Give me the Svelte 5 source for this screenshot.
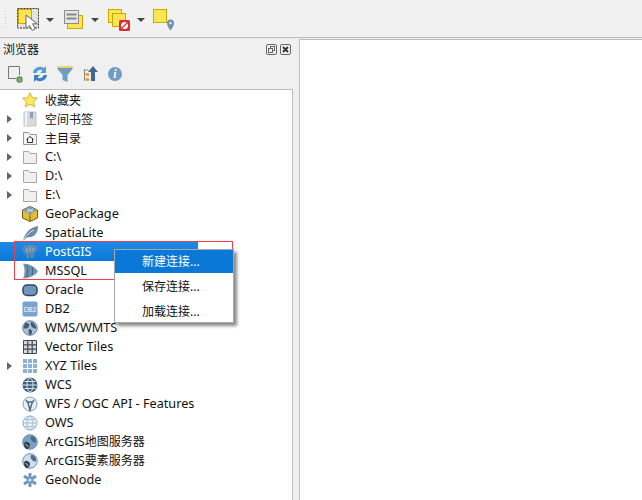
<script>
  const rows = [
    { k: 'star', c: '收藏夹' },
    { k: 'book', c: '空间书签', a: 1 },
    { k: 'home', c: '主目录', a: 1 },
    { k: 'folder', t: 'C:\\', a: 1 },
    { k: 'folder', t: 'D:\\', a: 1 },
    { k: 'folder', t: 'E:\\', a: 1 },
    { k: 'gpkg', t: 'GeoPackage' },
    { k: 'feather', t: 'SpatiaLite' },
    { k: 'pg', t: 'PostGIS', sel: 1 },
    { k: 'ms', t: 'MSSQL' },
    { k: 'oracle', t: 'Oracle' },
    { k: 'db2', t: 'DB2' },
    { k: 'globe', t: 'WMS/WMTS' },
    { k: 'grid', t: 'Vector Tiles' },
    { k: 'xyz', t: 'XYZ Tiles', a: 1 },
    { k: 'wcs', t: 'WCS' },
    { k: 'wfs', t: 'WFS / OGC API - Features' },
    { k: 'ows', t: 'OWS' },
    { k: 'arc', t: 'ArcGIS', c: '地图服务器' },
    { k: 'arc2', t: 'ArcGIS', c: '要素服务器' },
    { k: 'geonode', t: 'GeoNode' }
  ];
</script>

<div class="app">
  <header class="toolbar">
    <div class="grip"></div>
    <svg class="tool t1" width="26" height="37" viewBox="15 0 26 37">
      <rect x="17.500" y="8.500" width="21" height="19.500" fill="#e2e2e2" stroke="#333" stroke-dasharray="2 1" />
      <rect x="18.500" y="9.500" width="13" height="14" fill="#ffe552" stroke="#c9a800" />
      <path d="M26 15v13.500l3.500-3 2.800 5 3-1.700-2.800-5h4.800z" fill="#fff" stroke="#666" />
    </svg>
    <i class="drop d1"></i>
    <svg class="tool t2" width="23" height="37" viewBox="62 0 23 37">
      <rect x="67.500" y="15.500" width="15" height="13" fill="#ffe552" stroke="#c9a800" />
      <rect x="64.500" y="10.500" width="14" height="13" fill="#e6e6e6" stroke="#8c8c8c" />
      <path d="M66.500 14.500h10M66.500 18.500h10" stroke="#888" stroke-width="2" />
    </svg>
    <i class="drop d2"></i>
    <svg class="tool t3" width="24" height="37" viewBox="107 0 24 37">
      <rect x="108.500" y="9.500" width="13" height="13" fill="#ffe552" stroke="#c9a800" />
      <rect x="112.500" y="13.500" width="13" height="13" fill="#ffe552" stroke="#c9a800" />
      <rect x="119" y="20" width="11" height="11" rx="1.500" fill="#dd2a36" />
      <circle cx="124.500" cy="25.500" r="3.500" fill="#fff" />
      <path d="M122 28l5-5" stroke="#dd2a36" stroke-width="1.300" />
    </svg>
    <i class="drop d3"></i>
    <svg class="tool t4" width="24" height="37" viewBox="152 0 24 37">
      <rect x="153.500" y="9.500" width="13" height="13" fill="#ffe552" stroke="#c9a800" />
      <path d="M170.500 30.500c-2.500-3.500-3.500-5.500-3.500-7.500a3.500 3.500 0 0 1 7 0c0 2-1 4-3.500 7.500z" fill="#6f93a8" />
      <circle cx="170.500" cy="23" r="1.300" fill="#dce6ec" />
    </svg>
  </header>

  <main class="body">
    <section class="panel">
      <div class="title">
        <span>浏览器</span>
        <div class="winbtns">
          <svg width="11" height="11" viewBox="0 0 11 11"><rect x=".5" y=".5" width="10" height="10" rx="1.500" fill="none" stroke="#666" /><rect x="4.500" y="2.500" width="4" height="4" fill="none" stroke="#666" /><rect x="2.500" y="4.500" width="4" height="4" fill="#efefef" stroke="#666" /></svg>
          <svg width="11" height="11" viewBox="0 0 11 11"><rect x=".5" y=".5" width="10" height="10" rx="1.500" fill="none" stroke="#666" /><path d="M3 3l5 5M8 3l-5 5" stroke="#333" stroke-width="1.800" /></svg>
        </div>
      </div>
      <div class="panelbar">
        <svg width="16" height="18" viewBox="0 0 16 18"><path d="M12.500 10V1.500h-11v12H9" fill="none" stroke="#777" /><rect x="10" y="12" width="5" height="5" rx="1" fill="#7fae6d" stroke="#4f7d42" /></svg>
        <svg width="16" height="18" viewBox="0 0 16 18"><path d="M1 8a7 6.500 0 0 1 11-5l2-2v7H8l2.500-2.500A3.800 3.500 0 0 0 4.500 8z" fill="#5a9bd5" /><path d="M15 10a7 6.500 0 0 1-11 5l-2 2v-7h6l-2.500 2.500a3.800 3.500 0 0 0 6-2.500z" fill="#3f80bd" /></svg>
        <svg width="16" height="18" viewBox="0 0 16 18"><path d="M.5 2h15v2l-5 6v7l-5-2v-5l-5-6z" fill="#6f9cc0" /><rect x=".5" y="1" width="15" height="2" fill="#e8d668" /></svg>
        <svg width="16" height="18" viewBox="0 0 16 18"><path d="M1.500 5h5M2.500 5v11M2.500 9H5M2.500 14H5" stroke="#888" fill="none" /><rect x="4" y="8" width="3" height="3" fill="#e9a13c" /><rect x="4" y="13" width="3" height="3" fill="#e9a13c" /><path d="M11 1l5 6h-3v9H9V7H6z" fill="#41688f" /></svg>
        <svg width="16" height="18" viewBox="0 0 16 18"><circle cx="8" cy="9" r="7" fill="#6f9cc8" /><text x="8" y="13" font-size="12" font-weight="700" font-style="italic" font-family="Liberation Serif" text-anchor="middle" fill="#fff">i</text></svg>
      </div>
      <div class="tree">
        {#each rows as r}
          <div class="row" class:sel={r.sel}>
            <span class="arrow">{#if r.a}<i></i>{/if}</span>
            <svg class="icon" width="16" height="16" viewBox="0 0 16 16">
              {#if r.k === 'star'}
                <path d="M8 .8l2.200 4.800 5.200.6-3.900 3.500 1.100 5.200L8 12.300l-4.600 2.600 1.100-5.200L.6 6.200l5.200-.6z" fill="#fbe85f" stroke="#d5b430" />
              {:else if r.k === 'book'}
                <path d="M2 1h12v14H2z" fill="#d9d9d9" stroke="#c4c4c4" /><path d="M4 1v14" stroke="#f3f3f3" stroke-width="2" /><path d="M8 1h3v7l-1.500-1.500L8 8z" fill="#86a3bc" />
              {:else if r.k === 'home'}
                <path d="M1.500 14.500v-12h5l1.500 2h6.500v10z" fill="#f5f5f5" stroke="#999" /><path d="M4.500 9.500L8 6.500l3.500 3M5.500 9v3.500h5V9" fill="none" stroke="#333" />
              {:else if r.k === 'folder'}
                <path d="M1.500 14.500v-12h5l1.500 2h6.500v10z" fill="#f2f0ee" stroke="#a8a8a8" />
              {:else if r.k === 'gpkg'}
                <path d="M8 .5l7.500 3.500v8L8 15.500.5 12V4z" fill="#e8bd2b" stroke="#6b5a20" /><path d="M8 1l7 3-7 5-7-5z" fill="#7d9cb8" /><path d="M8 9v6.500" stroke="#6b5a20" /><path d="M5 3l6 3M11 3L5 6" stroke="#dfe7ef" />
              {:else if r.k === 'feather'}
                <path d="M1 16C2 9 8 2 16 1c0 5-2 10-7 11l-4 .5z" fill="#6d8aa6" /><path d="M1 16C4 10 8 7 12 5" stroke="#dfe7ee" fill="none" />
              {:else if r.k === 'pg'}
                <path d="M1 3c3-3 11-3 14 0 1 3-1 6-3 6v3c0 2-1 2-3 2l-1-5-1 6c-2 0-3-2-3-5C2 10 0 6 1 3z" fill="#5f89ad" /><path d="M8 3v5M5 4v4M11 4v3" stroke="#9dbad2" />
              {:else if r.k === 'ms'}
                <path d="M1 .5c6 0 12 3 15 8-3 4-9 7-15 7 2-4 2-11 0-15z" fill="#6f93b5" /><path d="M5 2c1 4 1 8 0 12M10 4c.8 3 .8 5 0 8" stroke="#3f607e" fill="none" />
              {:else if r.k === 'oracle'}
                <rect x="1" y="3" width="14" height="10.500" rx="4" fill="#6e95bb" stroke="#34475a" stroke-width="1.500" />
              {:else if r.k === 'db2'}
                <rect x="0.500" y="0.500" width="15" height="15" rx="2" fill="#7ba3d0" /><text x="8" y="10.500" font-size="6.500" font-family="Liberation Sans" text-anchor="middle" fill="#fff">DB2</text>
              {:else if r.k === 'globe'}
                <circle cx="8" cy="8" r="7.300" fill="#a9c1d6" stroke="#6485a1" /><path d="M3 3c2 0 5 0 4 3S3 9 1.500 8zM9 2c2 0 4 2 5 5s-3 1-4 0-2-3-1-5zM7 9c2 0 3 1 3 3s-1 3-2 3-2-4-1-6z" fill="#43596e" />
              {:else if r.k === 'arc' || r.k === 'arc2'}
                <circle cx="8" cy="8" r="7.300" fill={r.k === 'arc' ? '#7ba0c4' : '#cddded'} stroke="#6a90b4" /><path d="M9 2c3 0 5 2 5 5s-3 1-4 0-2-3-1-5z" fill="#4f6b85" /><path d="M2 11c0-2 1-4 3-3s3 1 3 3-1 3-2.500 4S2 13 2 11z" fill="#333d47" /><path d="M3.500 10l3 3" stroke="#ddd" />
              {:else if r.k === 'grid'}
                <path d="M1.500 1.500h13v13h-13z" fill="#d9d9d9" stroke="#3d4b58" /><path d="M1.500 5.800h13M1.500 10.200h13M5.800 1.500v13M10.200 1.500v13" stroke="#3d4b58" stroke-width="1.200" />
              {:else if r.k === 'xyz'}
                <path d="M1 1h4v4H1zM6 1h4v4H6zM11 1h4v4h-4zM1 6h4v4H1zM6 6h4v4H6zM11 6h4v4h-4zM1 11h4v4H1zM6 11h4v4H6zM11 11h4v4h-4z" fill="#8db0d4" />
              {:else if r.k === 'wcs'}
                <circle cx="8" cy="8" r="7.500" fill="#41607c" /><path d="M1 8h14M2.500 4.500h11M2.500 11.500h11" stroke="#dbe5ee" /><ellipse cx="8" cy="8" rx="3" ry="7" fill="none" stroke="#dbe5ee" />
              {:else if r.k === 'wfs'}
                <circle cx="8" cy="8" r="7" fill="#e7eef4" stroke="#7fa2c4" /><path d="M4 4l2 3 2 7 2-7 2-3M6 6h4" fill="none" stroke="#50667a" stroke-width="1.400" />
              {:else if r.k === 'ows'}
                <circle cx="8" cy="8" r="7" fill="#eaf1f7" stroke="#86aed0" /><path d="M1 8h14M2.500 4.500h11M2.500 11.500h11" stroke="#a5c0d6" /><ellipse cx="8" cy="8" rx="3" ry="7" fill="none" stroke="#a5c0d6" />
              {:else if r.k === 'geonode'}
                <path d="M8 1v14M2 4l12 8M14 4L2 12" stroke="#6f97bd" stroke-width="3" /><circle cx="8" cy="8" r="1.500" fill="#dfe9f2" />
              {/if}
            </svg>
            <span class="label" class:lat={r.t}>{#if r.t}{r.t}{/if}{#if r.c}<span class="cjk">{r.c}</span>{/if}</span>
          </div>
        {/each}
      </div>
    </section>
    <section class="canvas"></section>
  </main>

  <div class="redbox"></div>
  <nav class="menu">
    <div class="item on">新建连接...</div>
    <div class="item">保存连接...</div>
    <div class="item">加载连接...</div>
  </nav>
</div>

<style>
  :global(body) { margin: 0; }
  .app {
    position: relative;
    width: 642px;
    height: 500px;
    overflow: hidden;
    background: #f0f0f0;
    font-family: "Noto Sans", "Noto Sans CJK SC", sans-serif;
    font-size: 12.700px;
    color: #111;
  }
  .toolbar {
    height: 37px;
    border-bottom: 1px solid #bdbdbd;
    display: flex;
    align-items: flex-start;
    background: #f1f1f1;
  }
  .grip {
    width: 4px;
    height: 17px;
    margin: 10px 0 0 4px;
    background: radial-gradient(circle, #c5c5c5 0.8px, transparent 1px) 0 0 / 3px 3px;
  }
  .tool { display: block; flex: none; }
  .t1 { margin-left: 7px; }
  .t2 { margin-left: 8px; }
  .t3 { margin-left: 8px; }
  .t4 { margin-left: 7px; }
  .drop {
    width: 0;
    height: 0;
    border-left: 4px solid transparent;
    border-right: 4px solid transparent;
    border-top: 4px solid #444;
    margin: 18px 0 0 0;
    flex: none;
  }
  .d1 { margin-left: 5px; }
  .d2 { margin-left: 6px; }
  .d3 { margin-left: 6px; }
  .body { display: flex; height: 462px; }
  .panel { width: 293px; display: flex; flex-direction: column; flex: none; }
  .title {
    height: 22px;
    padding: 0 2px 0 3px;
    display: flex;
    justify-content: space-between;
    align-items: center;
    font-size: 12px;
  }
  .winbtns { display: flex; gap: 3px; }
  .panelbar {
    height: 29px;
    display: flex;
    align-items: center;
    gap: 9px;
    padding: 0 0 2px 7px;
    box-sizing: border-box;
  }
  .tree {
    flex: 1;
    background: #fff;
    border-top: 1px solid #bdbdbd;
    border-right: 1px solid #bdbdbd;
  }
  .row {
    height: 19px;
    display: flex;
    align-items: center;
  }
  .row.sel { background: linear-gradient(#1e8ae6, #0a78d7); color: #fff; width: 198px; }
  .arrow { width: 22px; flex: none; display: flex; justify-content: center; padding-right: 3px; box-sizing: border-box; }
  .arrow i {
    width: 0;
    height: 0;
    border-top: 4px solid transparent;
    border-bottom: 4px solid transparent;
    border-left: 5px solid #666;
  }
  .icon { flex: none; }
  .label { margin-left: 7px; white-space: nowrap; }
  .label.lat { margin-bottom: 2px; }
  .cjk { font-size: 12px; }
  .canvas {
    margin-left: 6px;
    flex: 1;
    background: #fff;
    border-left: 1px solid #bdbdbd;
    border-top: 1px solid #bdbdbd;
    margin-top: 1px;
  }
  .redbox {
    position: absolute;
    left: 14px;
    top: 241px;
    width: 217px;
    height: 37px;
    border: 1px solid #f0404a;
  }
  .menu {
    position: absolute;
    left: 114px;
    top: 249px;
    width: 120px;
    height: 74px;
    box-sizing: border-box;
    background: #fff;
    border: 1px solid #a8a8a8;
    box-shadow: 3px 3px 3px #8d8d8d;
    font-size: 12px;
  }
  .item { height: 25px; line-height: 27px; padding-left: 27px; white-space: nowrap; }
  .item.on { background: #0a78d7; color: #fff; height: 23px; line-height: 24px; }
</style>
